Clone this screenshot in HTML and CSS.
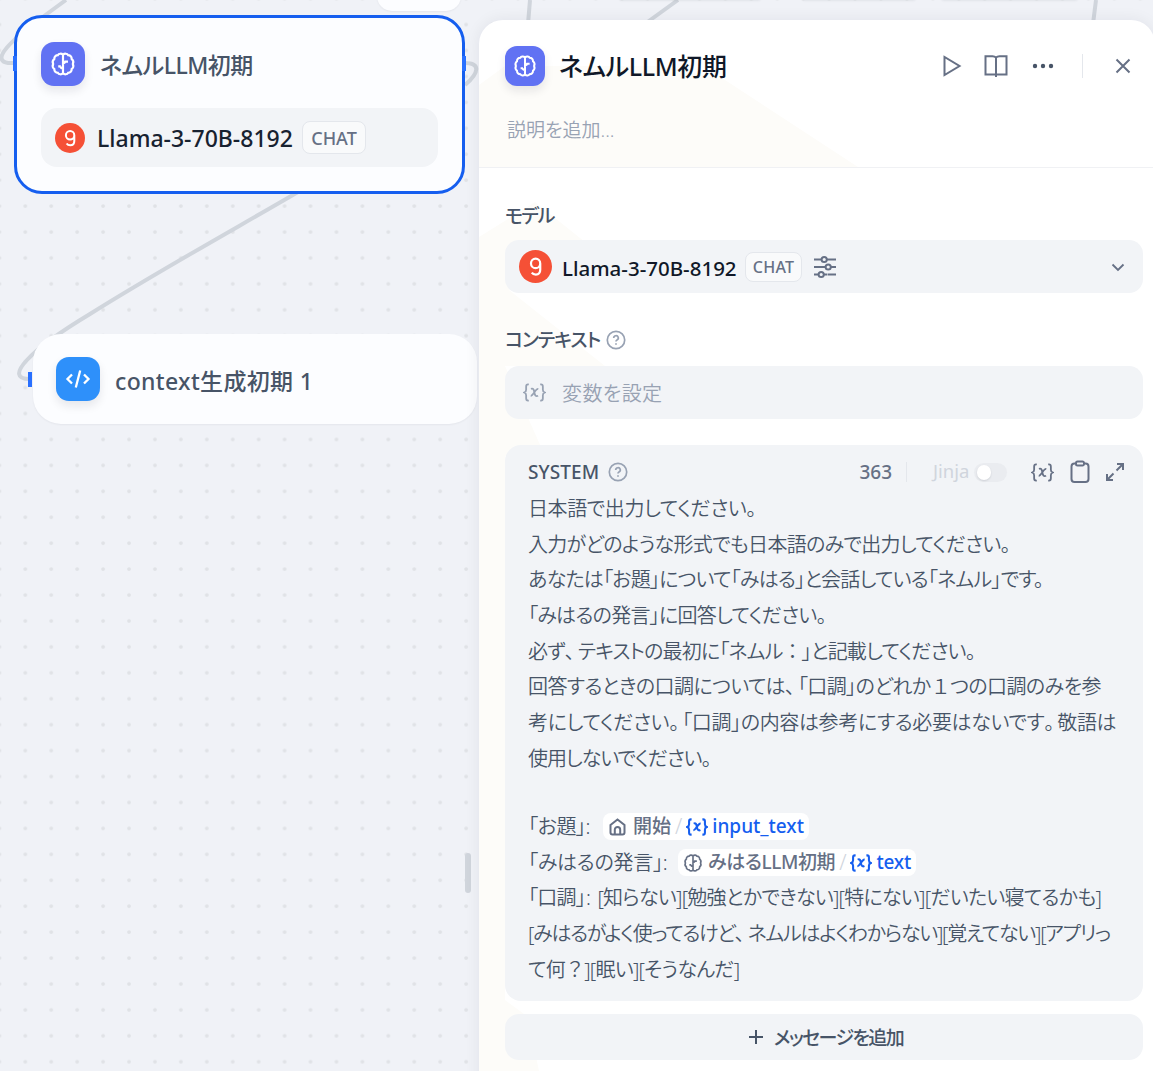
FILE: index.html
```html
<!DOCTYPE html>
<html lang="ja">
<head>
<meta charset="utf-8">
<title>ネムルLLM初期</title>
<link rel="stylesheet" href="styles.css">
</head>
<body>
<svg class="defs" width="0" height="0">
  <symbol id="brain" viewBox="0 0 24 24"><path d="M12 3v18M12 3.400C10.500 2 8 2.300 7.300 3.800 5.300 3.800 3.900 5.300 4 7.300 2.500 8.500 2.200 10.500 2.900 12 2.200 13.500 2.500 15.500 4 16.700 3.900 18.700 5.300 20.200 7.300 20.200 8 21.700 10.500 22 12 20.600 13.500 22 16 21.700 16.700 20.200 18.700 20.200 20.100 18.700 20 16.700 21.500 15.500 21.800 13.500 21.100 12 21.800 10.500 21.500 8.500 20 7.300 20.100 5.300 18.700 3.800 16.700 3.800 16 2.300 13.500 2 12 3.400M12 11.200c1.400 0 2.200-.8 2.200-2.200M13.400 9.800h3.200M12 16c-1.500 0-2.200-.5-2.200-1.700M7.600 14.200h2.400"/></symbol>
  <symbol id="groq" viewBox="0 0 30 30"><circle cx="15" cy="15" r="15" class="groq-bg"/><path class="groq-mark" d="M19.300 12.200a4.200 4.300 0 1 0-4.200 4.300c2 0 4.200-1.400 4.200-4.300v5.800c0 2.700-1.700 4.300-4 4.300-1.700 0-2.900-.6-3.700-1.800"/></symbol>
  <symbol id="var" viewBox="0 0 24 20"><path d="M6 1.500H5.200C3.600 1.500 3.200 2.500 3.200 4v3c0 1.600-.6 2.500-2 3 1.400.5 2 1.400 2 3v3c0 1.500.4 2.500 2 2.500H6M18 1.500h.8c1.600 0 2 1 2 2.500v3c0 1.600.6 2.500 2 3-1.400.5-2 1.400-2 3v3c0 1.500-.4 2.500-2 2.500H18M8.300 6.200c2.200-1 3 .3 3.500 3.300.6 3.600 1.600 5 4 3.900M16 6.300c-3-.6-5.300 7.400-8 7.200"/></symbol>
  <symbol id="help" viewBox="0 0 20 20"><circle cx="10" cy="10" r="8.700"/><path d="M7.700 8a2.300 2.300 0 1 1 3.300 2.100c-.7.400-1 .8-1 1.500M10 13.300v1.500"/></symbol>
</svg>
<main class="canvas">
  <svg class="edges" width="1153" height="1071">
    <defs><pattern id="dots" x="12.300" y="11.500" width="25.930" height="25.930" patternUnits="userSpaceOnUse"><circle cx="13" cy="13" r="1.900" class="dot"/></pattern></defs>
    <rect width="1153" height="1071" fill="url(#dots)"/>
    <path class="edge" d="M66 0 40 19C12 40-10 60 8 63h8M465 63c14 0 16 8 0 22M530 0l-2 24M678 0l-36 26M1096 0l-3 24M298 192C240 226 160 270 90 314 30 350 2 379 30 379"/>
  </svg>
  <div class="stub stub-main"></div>
  <div class="stub stub-a"></div><div class="stub stub-b"></div><div class="stub stub-c"></div>

  <section class="node node-llm">
    <i class="port port-in"></i><i class="port port-out"></i>
    <div class="node-head"><span class="tile tile-llm"><svg width="26" height="26"><use href="#brain"/></svg></span><span class="node-title t-llm">ネムルLLM初期</span></div>
    <div class="node-model"><svg width="30" height="30"><use href="#groq"/></svg><span class="model-name">Llama-3-70B-8192</span><span class="badge">CHAT</span></div>
  </section>

  <section class="node node-code">
    <i class="port port-code"></i>
    <div class="node-head"><span class="tile tile-code"><svg width="26" height="26" viewBox="0 0 26 26"><path d="M7 8.500 2.500 13 7 17.500M19 8.500l4.500 4.500-4.500 4.500M15.200 4.500l-4.400 17"/></svg></span><span class="node-title t-code">context生成初期 1</span></div>
  </section>
  <div class="grip"></div>
</main>

<aside class="panel">
  <svg class="tint" width="674" height="1051"><path d="M0 65 26 46 180 46 246 60 379 147H0zM0 217 56 182 106 222 30 270 126 346H0zM0 346h26l40 90H0zM0 436h26v544l30 22v30l4 19H0z"/></svg>
  <header class="head">
    <div class="head-row">
      <span class="tile tile-llm tile-sm"><svg width="24" height="24"><use href="#brain"/></svg></span>
      <h1>ネムルLLM初期</h1>
      <div class="tools">
        <svg width="20" height="22" viewBox="0 0 20 22"><path d="M2.500 2v18L17.500 11z"/></svg>
        <svg width="24" height="24" viewBox="0 0 24 24"><path d="M12 3.500c-1-1-2-1.300-3.500-1.300H1.500v18.300h21V2.200h-7c-1.500 0-2.500.3-3.500 1.300v19.500"/></svg>
        <svg class="more" width="22" height="6" viewBox="0 0 22 6"><circle cx="3" cy="3" r="2.200"/><circle cx="11" cy="3" r="2.200"/><circle cx="19" cy="3" r="2.200"/></svg>
        <i class="rule"></i>
        <svg width="16" height="16" viewBox="0 0 16 16"><path d="m1.500 1.500 13 13m0-13-13 13"/></svg>
      </div>
    </div>
    <p class="desc">説明を追加...</p>
  </header>
  <div class="body">
    <h2 class="l-model">モデル</h2>
    <div class="field">
      <svg width="33" height="33"><use href="#groq"/></svg><span class="model-name">Llama-3-70B-8192</span><span class="badge">CHAT</span>
      <svg class="sliders" width="24" height="24" viewBox="0 0 24 24"><path d="M1 4.500h7.500M14 4.500h9M1 12h11M18 12h5M1 19.500h4.500M11 19.500h3.500M15 19.500h8"/><circle cx="11.200" cy="4.500" r="2.600"/><circle cx="15.200" cy="12" r="2.600"/><circle cx="8.200" cy="19.500" r="2.600"/></svg>
      <svg class="chev" width="14" height="9" viewBox="0 0 14 9"><path d="m1.500 1.500 5.500 5.500 5.500-5.500"/></svg>
    </div>
    <h2 class="l-context">コンテキスト<svg class="help" width="20" height="20"><use href="#help"/></svg></h2>
    <div class="field field-var"><svg class="var" width="23" height="19"><use href="#var"/></svg><span>変数を設定</span></div>

    <section class="prompt">
      <div class="prompt-head">
        <b>SYSTEM</b><svg class="help" width="20" height="20"><use href="#help"/></svg>
        <span class="count">363</span><i class="rule"></i>
        <span class="jinja">Jinja</span><span class="switch"></span>
        <svg class="ico var" width="23" height="19"><use href="#var"/></svg>
        <svg class="ico clip" width="20" height="24" viewBox="0 0 20 24"><path d="M6 3.500H4.500a3 3 0 0 0-3 3V19a3 3 0 0 0 3 3h11a3 3 0 0 0 3-3V6.500a3 3 0 0 0-3-3H14M7.500 1.500h5a1.500 1.500 0 0 1 1.500 1.500v1a1.500 1.500 0 0 1-1.500 1.500h-5A1.500 1.500 0 0 1 6 4V3a1.500 1.500 0 0 1 1.500-1.500z"/></svg>
        <svg class="ico" width="20" height="20" viewBox="0 0 20 20"><path d="M12 2h6v6M17.500 2.500 11.500 8.500M8 18H2v-6M2.500 17.500l6-6"/></svg>
      </div>
      <div class="text">
        <p class="p1">日本語で出力してください。</p>
        <p class="p2">入力がどのような形式でも日本語のみで出力してください。</p>
        <p class="p3">あなたは「お題」について「みはる」と会話している「ネムル」です。</p>
        <p class="p4">「みはるの発言」に回答してください。</p>
        <p class="p5">必ず<span class="gap">、</span>テキストの最初に「ネムル<span class="full">：</span>」と記載してください。</p>
        <p class="p6">回答するときの口調については<span class="gap">、</span>「口調」のどれか<span class="full">１</span>つの口調のみを参</p>
        <p class="p7">考にしてください<span class="gap">。</span>「口調」の内容は参考にする必要はないです<span class="gap">。</span>敬語は</p>
        <p class="p8">使用しないでください。</p>
        <p class="blank"></p>
        <p class="p9"><span class="lead lead-a">「お題」:</span><span class="chip"><svg width="17" height="18" viewBox="0 0 17 18"><path d="M1.500 7 8.500 1.500 15.500 7v7.500a2 2 0 0 1-2 2h-10a2 2 0 0 1-2-2zM5.800 16.500v-4.800a2.700 2.700 0 0 1 5.400 0v4.800"/></svg><b>開始</b><i>/</i><svg class="cv" width="22" height="18"><use href="#var"/></svg><em class="e1">input_text</em></span></p>
        <p class="p10"><span class="lead lead-b">「みはるの発言」:</span><span class="chip chip-b"><svg class="cb" width="20" height="20"><use href="#brain"/></svg><b>みはるLLM初期</b><i>/</i><svg class="cv" width="22" height="18"><use href="#var"/></svg><em class="e2">text</em></span></p>
        <p class="p11">「口調」<span class="colon">:</span> [知らない][勉強とかできない][特にない][だいたい寝てるかも]</p>
        <p class="p12">[みはるがよく使ってるけど<span class="gap">、</span>ネムルはよくわからない][覚えてない][アプリっ</p>
        <p class="p13">て何<span class="full">？</span>][眠い][そうなんだ]</p>
      </div>
    </section>
    <button class="add"><svg width="14" height="14" viewBox="0 0 14 14"><path d="M7 0v14M0 7h14"/></svg><span>メッセージを追加</span></button>
  </div>
</aside>
</body>
</html>
```
FILE: styles.css
```css
* { box-sizing: border-box; }
body {
  margin: 0; width: 1153px; height: 1071px; overflow: hidden; position: relative;
  background: #f0f2f7; color: #475467;
  font-family: "Noto Sans", "Noto Sans CJK JP", sans-serif;
  font-feature-settings: "palt";
}
svg { fill: none; stroke: currentColor; stroke-width: 2; flex: none; display: block; }
h1, h2, p { margin: 0; font-weight: 500; white-space: nowrap; }
.defs { position: absolute; }
.canvas { position: absolute; inset: 0; overflow: hidden; }
.edges { position: absolute; left: 0; top: 0; stroke: none; }
.dot { fill: #e0e2e6; }
.edge { fill: none; stroke: #d0d5dc; stroke-width: 4; }
.stub { position: absolute; background: #fcfdff; }
.stub-main { left: 377px; top: -20px; width: 84px; height: 31px; border-radius: 15px; box-shadow: 0 1px 2px #1018280d; }
.stub-a, .stub-b, .stub-c { top: -11px; height: 10px; box-shadow: 0 1px 3px #10182820; }
.stub-a { left: 620px; width: 140px; }
.stub-b { left: 803px; width: 112px; }
.stub-c { left: 942px; width: 135px; }

.node { position: absolute; background: #fcfdff; border-radius: 28px; }
.node-llm { left: 14px; top: 15px; width: 451px; height: 179px; border: 3px solid #155eef; padding: 24px 24px 0; }
.node-code { left: 33px; top: 334px; width: 444px; height: 90px; padding: 23px; box-shadow: 0 1px 2px #1018280d; }
.port { position: absolute; width: 4px; height: 15px; background: #2970ff; }
.port-in { left: -4px; top: 38px; }
.port-out { right: -4px; top: 38px; }
.port-code { left: -5px; top: 38px; }
.node-head { display: flex; align-items: center; height: 44px; }
.tile { width: 44px; height: 44px; border-radius: 13px; color: #fff; display: flex; align-items: center; justify-content: center; flex: none; box-shadow: 0 5px 10px #10182818; }
.tile-llm { background: #6172f3; }
.tile-code { background: #2e90fa; }
.tile-code svg { stroke-width: 2.300; }
.tile-sm { width: 40px; height: 40px; border-radius: 12px; }
.node-title { font-size: 23px; font-weight: 500; margin-left: 15px; white-space: nowrap; }
.t-llm { letter-spacing: -.5px; }
.t-code { letter-spacing: .35px; padding-top: 1px; }
.node-model { margin-top: 22px; height: 59px; width: 397px; border-radius: 16px; background: #f2f4f7; display: flex; align-items: center; padding-left: 14px; }
.model-name { color: #182230; font-weight: 500; white-space: nowrap; }
.node-model .model-name { font-size: 23px; margin-left: 12px; width: 205px; }
.badge { border: 1.500px solid #e4e7ec; background: #f9fafb; border-radius: 8px; color: #667085; font-weight: 500; display: flex; align-items: center; justify-content: center; }
.node-model .badge { width: 64px; height: 33px; font-size: 18px; }
.groq-bg { fill: #f55036; stroke: none; }
.groq-mark { stroke: #fff; stroke-width: 2; fill: none; }
.grip { position: absolute; left: 465px; top: 853px; width: 6px; height: 40px; border-radius: 3px; background: #d0d5dc; }

.panel { position: absolute; left: 479px; top: 20px; width: 676px; height: 1070px; background: #fff; border-radius: 24px 24px 0 0; box-shadow: 0 0 16px #10182812; }
.tint { position: absolute; left: 0; top: 0; stroke: none; fill: #fdfcf9; border-radius: 24px 0 0; }
.head { position: relative; height: 148px; padding: 26px 24px 0 26px; border-bottom: 1px solid #f0f1f4; }
.head-row { display: flex; align-items: center; height: 40px; }
h1 { font-size: 25px; color: #101828; margin-left: 14px; line-height: 40px; flex: 1; letter-spacing: -.35px; }
.tools { display: flex; align-items: center; color: #667085; }
.tools svg:nth-child(2) { margin-left: 22px; }
.tools .more { margin-left: 24px; fill: #475467; stroke: none; }
.rule { width: 1px; height: 24px; background: #e4e7ec; }
.tools .rule { margin: 0 32px 0 28px; }
.desc { margin: 29px 0 0 2px; font-size: 19px; line-height: 30px; font-weight: 350; color: #98a2b3; }
.body { position: relative; padding: 33px 12px 0 26px; }
h2 { font-size: 19px; line-height: 30px; height: 30px; display: flex; align-items: center; letter-spacing: -1px; }
.l-model { letter-spacing: -1.600px; }
.help { color: #98a2b3; stroke-width: 1.700; }
h2 .help { margin-left: 6px; }
.field { margin-top: 9px; height: 53px; border-radius: 14px; background: #f2f4f7; display: flex; align-items: center; padding: 0 18px 0 14px; }
.field .model-name { font-size: 20.500px; margin: 2px 0 0 10px; width: 183px; color: #101828; }
.field .badge { width: 57px; height: 30px; font-size: 16px; padding-top: 1px; letter-spacing: .2px; }
.sliders { color: #667085; margin-left: 11px; }
.chev { margin: 1px 0 0 auto; color: #667085; stroke-width: 1.800; }
.l-context { margin-top: 32px; }
.l-context + .field { margin-top: 11px; }
.field-var { color: #98a2b3; font-size: 20px; font-weight: 350; padding-left: 18px; letter-spacing: .4px; }
.field-var span { margin-left: 16px; }
.var { stroke-width: 1.900; }
.prompt { margin-top: 26px; height: 556px; border-radius: 16px; background: #f2f4f7; padding: 13px 18px 0 23px; }
.prompt-head { display: flex; align-items: center; height: 28px; color: #667085; font-size: 19px; }
.prompt-head b { font-weight: 500; color: #475467; width: 80px; font-size: 19px; letter-spacing: .1px; }
.count { font-weight: 500; margin-left: auto; }
.prompt-head .rule { margin: 0 26px 0 14px; height: 20px; }
.jinja { color: #d0d5dd; font-size: 18.500px; margin-top: -4px; width: 41px; }
.switch { width: 33px; height: 19px; border-radius: 10px; background: #eaecf0; position: relative; }
.switch::after { content: ""; position: absolute; left: 3px; top: 2px; width: 14px; height: 15px; border-radius: 8px; background: #fff; box-shadow: 0 1px 2px #10182820; }
.ico { margin-left: 15.500px; }
.switch + .ico { margin-left: 24px; }
.text { font-size: 20px; font-weight: 350; margin-top: 5px; }
.text p { height: 35.700px; line-height: 35.700px; font-weight: 350; }
.text .blank { height: 32.500px; }
.full { font-feature-settings: "palt" 0; }
.gap { letter-spacing: 3px; }
.colon { letter-spacing: 2px; margin-left: 1px; }
.text .p1 { letter-spacing: -.42px; }
.text .p2 { letter-spacing: -.7px; }
.text .p3 { letter-spacing: -.78px; }
.text .p4 { letter-spacing: -.72px; }
.text .p5 { letter-spacing: -.84px; }
.text .p6 { letter-spacing: -.56px; }
.text .p7 { letter-spacing: -.36px; }
.text .p8 { letter-spacing: -1.050px; }
.text .p11 { letter-spacing: -.74px; }
.text .p12 { letter-spacing: -1.260px; }
.text .p13 { letter-spacing: -.75px; }
.text .p9, .text .p10 { display: flex; align-items: center; }
.lead-a { width: 75px; letter-spacing: -.4px; }
.lead-b { width: 150px; letter-spacing: -.25px; }
.chip { display: flex; align-items: center; height: 27px; border-radius: 8px; background: #fff; color: #667085; padding: 0 5px 0 6px; }
.chip b { font-weight: 500; font-size: 19px; margin-left: 7px; }
.chip-b { padding-left: 5px; }
.chip-b b { margin-left: 5px; letter-spacing: -.4px; }
.chip i { font-style: normal; font-size: 21px; color: #d0d5dd; margin: 0 4px; }
.chip em { font-style: normal; font-weight: 500; font-size: 19px; color: #155eef; margin-left: 4px; }
.chip-b i { margin: 0 4px; }
.chip .e2 { letter-spacing: -.2px; }
.chip .cv { color: #155eef; stroke-width: 2.300; }
.add { margin-top: 13px; width: 100%; height: 46px; border: 0; border-radius: 14px; background: #f2f4f7; color: #475467; font: 500 19px "Noto Sans", "Noto Sans CJK JP", sans-serif; font-feature-settings: "palt"; display: flex; align-items: center; justify-content: center; gap: 11px; letter-spacing: -1.600px; padding-left: 10px; }
```
